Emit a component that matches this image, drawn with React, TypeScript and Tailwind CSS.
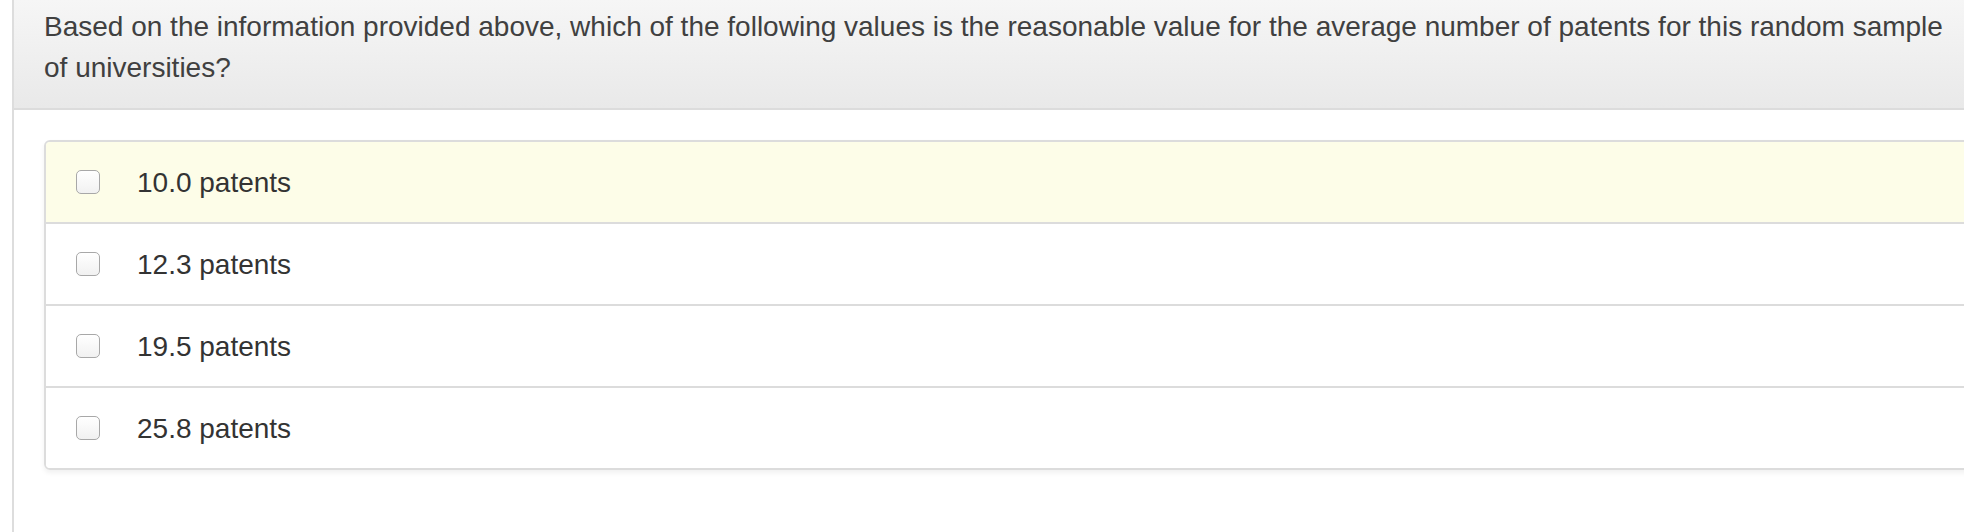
import React from "react";

const options = ["10.0 patents", "12.3 patents", "19.5 patents", "25.8 patents"];

export default function App() {
  return (
    <div
      className="w-[1964px] h-[532px] overflow-hidden bg-white"
      style={{ fontFamily: '"Liberation Sans", Arial, Helvetica, sans-serif' }}
    >
      <div className="ml-[12px] h-full border-l-2 border-[#dddddd] flex flex-col">
        <div className="bg-gradient-to-b from-[#f6f6f6] to-[#e9e9e9] border-b-2 border-[#dcdcdc] pl-[30px] pr-[12px] pt-[6px] pb-[19px]">
          <p className="text-[28px] leading-[41.25px] text-[#404040]">
            Based on the information provided above, which of the following values is the reasonable value for the average number of patents for this random sample of universities?
          </p>
        </div>
        <div className="pl-[30px] pt-[30px]">
          <div className="w-[2000px] border-2 border-[#dcdcdc] rounded-[6px] shadow-[0_3px_5px_rgba(0,0,0,0.06)] overflow-hidden">
            {options.map((o, i) => (
              <div
                key={o}
                className={`flex items-center pl-[30px] ${i > 0 ? "h-[82px] border-t-2 border-[#dcdcdc] bg-white" : "h-[80px] bg-[#fdfde8]"}`}
              >
                <div className="w-[24px] h-[24px] rounded-[5px] border-[1.5px] border-[#a8a8a8] bg-gradient-to-b from-white to-[#f1f1f1] shrink-0" />
                <span className="ml-[37px] pt-[2px] text-[28px] text-[#333333] leading-none">{o}</span>
              </div>
            ))}
          </div>
        </div>
      </div>
    </div>
  );
}
